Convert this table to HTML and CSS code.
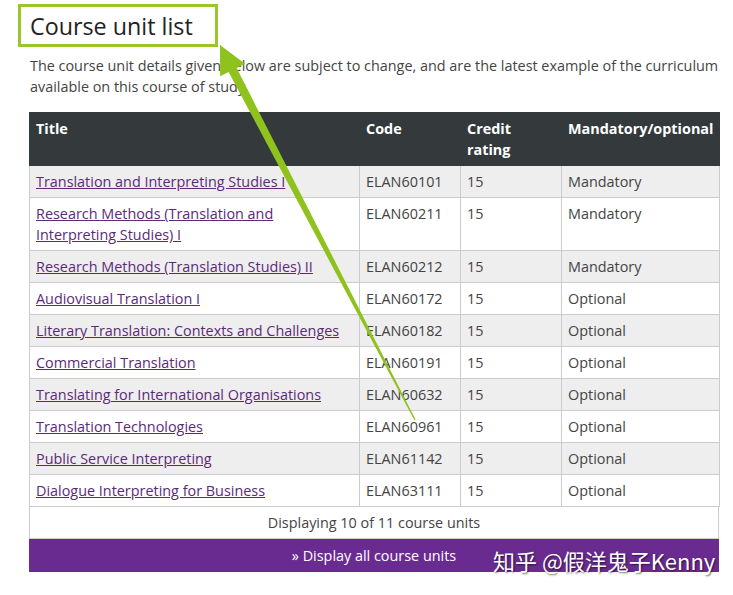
FILE: index.html
```html
<!DOCTYPE html>
<html lang="en">
<head>
<meta charset="utf-8">
<title>Course unit list</title>
<link rel="stylesheet" href="styles.css">
</head>
<body>
<div class="page">
  <h1 class="title">Course unit list</h1>
  <p class="intro">The course unit details given below are subject to change, and are the latest example of the curriculum available on this course of study.</p>
  <table class="units">
    <colgroup>
      <col class="c-title"><col class="c-code"><col class="c-credit"><col class="c-mand">
    </colgroup>
    <thead>
      <tr><th>Title</th><th>Code</th><th>Credit rating</th><th>Mandatory/optional</th></tr>
    </thead>
    <tbody>
      <tr><td><a href="#">Translation and Interpreting Studies I</a></td><td>ELAN60101</td><td>15</td><td>Mandatory</td></tr>
      <tr><td><a href="#">Research Methods (Translation and Interpreting Studies) I</a></td><td>ELAN60211</td><td>15</td><td>Mandatory</td></tr>
      <tr><td><a href="#">Research Methods (Translation Studies) II</a></td><td>ELAN60212</td><td>15</td><td>Mandatory</td></tr>
      <tr><td><a href="#">Audiovisual Translation I</a></td><td>ELAN60172</td><td>15</td><td>Optional</td></tr>
      <tr><td><a href="#">Literary Translation: Contexts and Challenges</a></td><td>ELAN60182</td><td>15</td><td>Optional</td></tr>
      <tr><td><a href="#">Commercial Translation</a></td><td>ELAN60191</td><td>15</td><td>Optional</td></tr>
      <tr><td><a href="#">Translating for International Organisations</a></td><td>ELAN60632</td><td>15</td><td>Optional</td></tr>
      <tr><td><a href="#">Translation Technologies</a></td><td>ELAN60961</td><td>15</td><td>Optional</td></tr>
      <tr><td><a href="#">Public Service Interpreting</a></td><td>ELAN61142</td><td>15</td><td>Optional</td></tr>
      <tr><td><a href="#">Dialogue Interpreting for Business</a></td><td>ELAN63111</td><td>15</td><td>Optional</td></tr>
    </tbody>
  </table>
  <div class="table-count">Displaying 10 of 11 course units</div>
  <a class="show-all" href="#">» Display all course units</a>
</div>

<div class="highlight-box"></div>
<svg class="arrow" width="733" height="595" viewBox="0 0 733 595" aria-hidden="true">
  <polygon points="220,45 220.1,76.3 228.6,72 414.4,420.3 415.6,419.7 236.6,68 245.1,63.7" fill="#8fc21c"/>
</svg>
<div class="watermark">知乎 @假洋鬼子Kenny</div>
</body>
</html>
```
FILE: styles.css
```css
html, body {
  margin: 0;
  padding: 0;
  background: #ffffff;
}
body {
  font-family: "Open Sans", "Noto Sans", sans-serif;
  color: #444444;
  width: 733px;
  height: 595px;
  overflow: hidden;
  position: relative;
}
.page {
  padding: 10px 14px 0 29px;
}
.title {
  margin: 0 0 0 1px;
  font-size: 23.3px;
  line-height: 32px;
  font-weight: 400;
  color: #222222;
}
.intro {
  margin: 13px 0 15px 1px;
  font-size: 14.4px;
  line-height: 21px;
  color: #444444;
}
.units {
  width: 690px;
  border-collapse: collapse;
  table-layout: fixed;
  font-size: 14.4px;
  line-height: 21px;
}
.c-title { width: 330px; }
.c-code { width: 101px; }
.c-credit { width: 101px; }
.c-mand { width: 158px; }
.units th {
  background: #343a3c;
  color: #ffffff;
  font-weight: 700;
  text-align: left;
  vertical-align: top;
  padding: 5px 6px;
  border: 1px solid #343a3c;
}
.units td {
  padding: 5px 6px;
  vertical-align: top;
  border: 1px solid #cccccc;
  color: #444444;
}
.units tbody tr:nth-child(odd) td {
  background: #eeeeee;
}
.units a {
  color: #5b2a78;
  text-decoration: underline;
}
.table-count {
  width: 688px;
  border: 1px solid #cccccc;
  border-top: 0;
  text-align: center;
  font-size: 14.4px;
  line-height: 21px;
  padding: 5px 0 5px;
  color: #444444;
}
.show-all {
  display: block;
  width: 690px;
  background: #6a2b91;
  color: #ffffff;
  text-align: center;
  text-decoration: none;
  font-size: 14.4px;
  line-height: 21px;
  padding: 6px 0 6px;
}
.highlight-box {
  position: absolute;
  left: 18px;
  top: 4px;
  width: 194px;
  height: 37px;
  border: 3px solid #98c62c;
}
.arrow {
  position: absolute;
  left: 0;
  top: 0;
  pointer-events: none;
}
.watermark {
  position: absolute;
  left: 493px;
  top: 545px;
  font-family: "Noto Sans CJK SC", "Noto Sans", sans-serif;
  font-size: 22px;
  line-height: 30px;
  color: #ffffff;
  text-shadow: 1px 1px 2px rgba(0,0,0,0.6);
}
```
